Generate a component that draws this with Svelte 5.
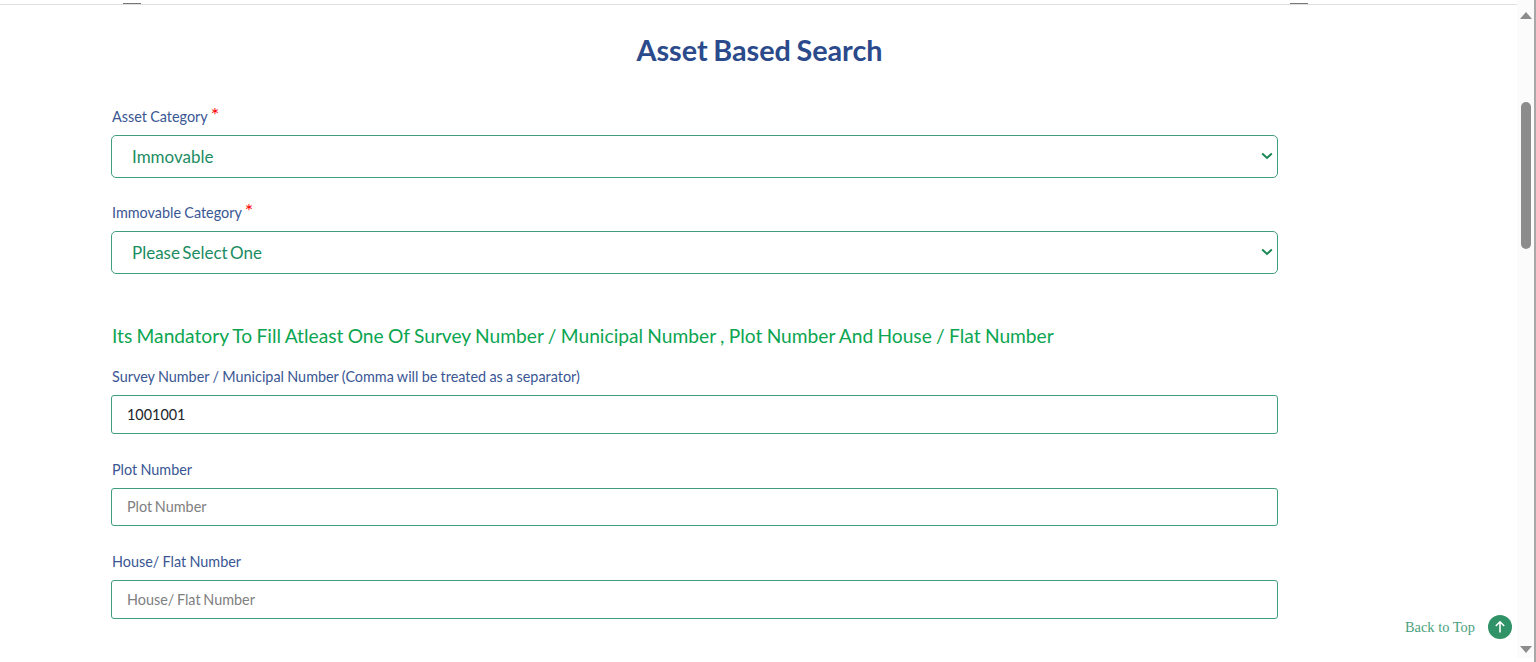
<script>
  let surveyNumber = '1001001';
  let plotNumber = '';
  let houseNumber = '';
</script>

<div class="page">
  <main class="content">
    <div class="top-edge">
      <span class="tick"></span>
      <span class="tick"></span>
    </div>

    <h1>Asset Based Search</h1>

    <form class="form">
      <div class="field select-field first">
        <label for="asset">Asset Category <span class="req">*</span></label>
        <div class="select-wrap">
          <select id="asset">
            <option>Immovable</option>
          </select>
          <svg class="chevron" viewBox="0 0 12 8" width="12" height="8">
            <path d="M1.2 1.5 L6 6 L10.8 1.5" fill="none" stroke="#198754" stroke-width="2" />
          </svg>
        </div>
      </div>

      <div class="field select-field second">
        <label for="immovable">Immovable Category <span class="req">*</span></label>
        <div class="select-wrap">
          <select id="immovable">
            <option>Please Select One</option>
          </select>
          <svg class="chevron" viewBox="0 0 12 8" width="12" height="8">
            <path d="M1.2 1.5 L6 6 L10.8 1.5" fill="none" stroke="#198754" stroke-width="2" />
          </svg>
        </div>
      </div>

      <h2>Its Mandatory To Fill Atleast One Of Survey Number / Municipal Number , Plot Number And House / Flat Number</h2>

      <div class="field input-field">
        <label for="survey">Survey Number / Municipal Number (Comma will be treated as a separator)</label>
        <input id="survey" type="text" bind:value={surveyNumber} />
      </div>

      <div class="field input-field">
        <label for="plot">Plot Number</label>
        <input id="plot" type="text" placeholder="Plot Number" bind:value={plotNumber} />
      </div>

      <div class="field input-field">
        <label for="house">House/ Flat Number</label>
        <input id="house" type="text" placeholder="House/ Flat Number" bind:value={houseNumber} />
      </div>
    </form>
  </main>

  <div class="scrollbar">
    <svg class="arrow" viewBox="0 0 12 7" width="12" height="7"><path d="M6 0 L12 7 L0 7 Z" fill="#8c8c8c" /></svg>
    <div class="track"><div class="thumb"></div></div>
    <svg class="arrow" viewBox="0 0 12 7" width="12" height="7"><path d="M0 0 L12 0 L6 7 Z" fill="#8c8c8c" /></svg>
  </div>
  <div class="window-edge"></div>

  <a class="back-to-top" href="#top">
    <span>Back to Top</span>
    <span class="circle">
      <svg viewBox="0 0 14 14" width="14" height="14">
        <path d="M7 12.5 V2 M2.8 6 L7 1.8 L11.2 6" fill="none" stroke="#fff" stroke-width="1.6" />
      </svg>
    </span>
  </a>
</div>

<style>
  :global(body) {
    margin: 0;
    background: #fff;
  }

  .page {
    position: relative;
    display: flex;
    width: 1536px;
    height: 662px;
    overflow: hidden;
    font-family: Lato, "Liberation Sans", sans-serif;
  }

  .content {
    flex: 1;
    min-width: 0;
  }

  .top-edge {
    display: flex;
    gap: 1149px;
    height: 4px;
    padding-left: 123px;
    border-bottom: 1px solid #dfdfdf;
  }

  .tick {
    align-self: flex-end;
    width: 18px;
    height: 1px;
    background: #777;
  }

  h1 {
    margin: 27px 0 0;
    padding-left: 2px;
    text-align: center;
    font-size: 28.8px;
    line-height: 36px;
    font-weight: 700;
    word-spacing: -1.5px;
    color: #2b4a8b;
  }

  .form {
    width: 1167px;
    margin-left: 111px;
  }

  label {
    display: block;
    padding-left: 1px;
    font-size: 14.4px;
    line-height: 18px;
    word-spacing: -0.4px;
    color: #3a5794;
  }

  .req {
    position: relative;
    top: 0;
    color: #f00;
    font-size: 20px;
    font-weight: 400;
    line-height: 0;
  }

  .select-field.first {
    margin-top: 40px;
  }

  .select-field.second {
    margin-top: 26px;
  }

  .select-wrap {
    position: relative;
    margin-top: 9px;
  }

  select {
    display: block;
    width: 100%;
    height: 43px;
    padding: 0 20px;
    box-sizing: border-box;
    appearance: none;
    background: #fff;
    border: 1px solid #3f9f7a;
    border-radius: 5px;
    color: #1c8c62;
    font-family: inherit;
    font-size: 17px;
    word-spacing: -2px;
  }

  .chevron {
    position: absolute;
    top: 17px;
    right: 5px;
    pointer-events: none;
  }

  h2 {
    margin: 49px 0 0;
    padding-left: 1px;
    font-size: 19.2px;
    line-height: 26px;
    font-weight: 400;
    word-spacing: -0.6px;
    color: #0ca551;
  }

  .input-field {
    margin-top: 19px;
  }

  .input-field + .input-field {
    margin-top: 27px;
  }

  input {
    display: block;
    width: 100%;
    height: 38.5px;
    margin-top: 9px;
    padding: 0 15px;
    box-sizing: border-box;
    background: #fff;
    border: 1px solid #3f9f7a;
    border-radius: 3px;
    color: #212529;
    font-family: inherit;
    font-size: 14.4px;
    word-spacing: -1px;
    outline: none;
  }

  input::placeholder {
    color: #808080;
    opacity: 1;
  }

  .scrollbar {
    display: flex;
    flex-direction: column;
    align-items: center;
    width: 17px;
    height: 658px;
    padding: 12px 0 5px;
    box-sizing: border-box;
    background: #fbfbfb;
  }

  .track {
    flex: 1;
    width: 100%;
    padding-top: 83px;
    box-sizing: border-box;
  }

  .thumb {
    width: 10px;
    height: 147px;
    margin-left: 4px;
    border-radius: 5px;
    background: #8c8c8c;
  }

  .window-edge {
    width: 2px;
    background: #a8a8a8;
  }

  .back-to-top {
    position: absolute;
    top: 615px;
    left: 1405px;
    display: flex;
    align-items: center;
    gap: 13px;
    color: #4aa27e;
    font-family: "Liberation Serif", serif;
    font-size: 14.4px;
    text-decoration: none;
  }

  .circle {
    display: flex;
    align-items: center;
    justify-content: center;
    width: 24px;
    height: 24px;
    border-radius: 50%;
    background: #2f9367;
  }
</style>
